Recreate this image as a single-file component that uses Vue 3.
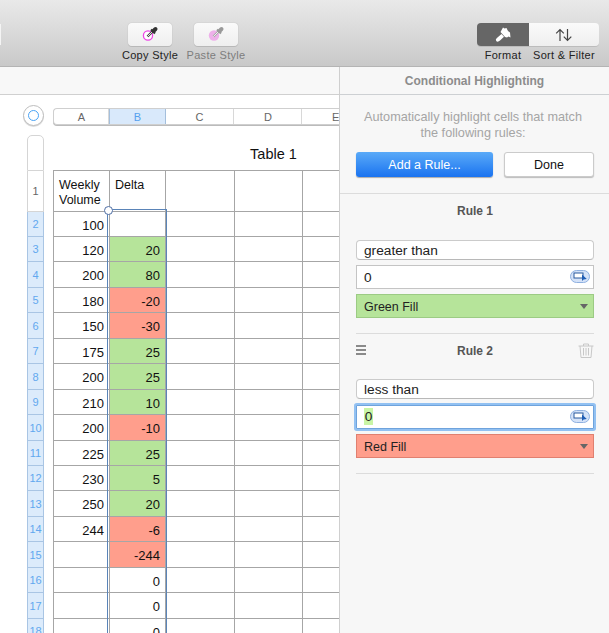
<script setup>
const cols = ['A', 'B', 'C', 'D', 'E']
const rows = [
  { n: 1, h: 41, a: 'Weekly\nVolume', b: 'Delta', head: true },
  { n: 2, h: 25, a: '100', b: '' },
  { n: 3, h: 25, a: '120', b: '20', f: 'g' },
  { n: 4, h: 26, a: '200', b: '80', f: 'g' },
  { n: 5, h: 25, a: '180', b: '-20', f: 'r' },
  { n: 6, h: 26, a: '150', b: '-30', f: 'r' },
  { n: 7, h: 25, a: '175', b: '25', f: 'g' },
  { n: 8, h: 26, a: '200', b: '25', f: 'g' },
  { n: 9, h: 25, a: '210', b: '10', f: 'g' },
  { n: 10, h: 26, a: '200', b: '-10', f: 'r' },
  { n: 11, h: 25, a: '225', b: '25', f: 'g' },
  { n: 12, h: 25, a: '230', b: '5', f: 'g' },
  { n: 13, h: 26, a: '250', b: '20', f: 'g' },
  { n: 14, h: 25, a: '244', b: '-6', f: 'r' },
  { n: 15, h: 26, a: '', b: '-244', f: 'r' },
  { n: 16, h: 25, a: '', b: '0' },
  { n: 17, h: 26, a: '', b: '0' },
  { n: 18, h: 25, a: '', b: '0' },
]
</script>

<template>
  <div class="app">
    <header class="toolbar">
      <div class="cut"></div>
      <div class="tool">
        <div class="tbtn">
          <svg width="20" height="18" viewBox="0 0 20 18" fill="none">
            <circle cx="8" cy="9.5" r="4.6" fill="#fff" stroke="#ee44e6" stroke-width="1.3"/>
            <path d="M7.5 10.5 L12.5 5.5" stroke="#444" stroke-width="2.4"/>
            <path d="M7.5 10.5 L12.5 5.5" stroke="#ddd" stroke-width="1"/>
            <path d="M11 3.5 L15 7.5" stroke="#333" stroke-width="2.2"/>
            <path d="M13.5 5 L15.5 3" stroke="#333" stroke-width="4" stroke-linecap="round"/>
          </svg>
        </div>
        <span class="tl">Copy Style</span>
      </div>
      <div class="tool dim">
        <div class="tbtn">
          <svg width="20" height="18" viewBox="0 0 20 18" fill="none">
            <circle cx="8" cy="9.5" r="5.2" fill="#eeb0ea"/>
            <path d="M7.5 10.5 L12.5 5.5" stroke="#aaa" stroke-width="2.4"/>
            <path d="M7.5 10.5 L12.5 5.5" stroke="#eee" stroke-width="1"/>
            <path d="M11 3.5 L15 7.5" stroke="#999" stroke-width="2.2"/>
            <path d="M13.5 5 L15.5 3" stroke="#999" stroke-width="4" stroke-linecap="round"/>
          </svg>
        </div>
        <span class="tl">Paste Style</span>
      </div>
      <div class="seg-wrap">
        <div class="seg-col">
          <div class="seg dark">
            <svg width="18" height="18" viewBox="0 0 18 18">
              <path d="M6.5 6 L9 1.5 L10.5 2.5 L12.5 2 L14 5 L16 6.5 L16.5 11.5 L14.5 10.5 L13 11.5 L11 11 Z" fill="#fff"/>
              <path d="M7.5 8 L10 10.8 L6 14.5 Q3.8 16.5 2.2 15 Q1 13.3 3.2 11.8 Z" fill="#fff"/>
            </svg>
          </div>
          <span class="tl">Format</span>
        </div>
        <div class="seg-col">
          <div class="seg light">
            <svg width="18" height="14" viewBox="0 0 18 14" fill="none" stroke="#444" stroke-width="1.2">
              <path d="M5 13 V1.5 M1.2 5.3 L5 1.5 L8.8 5.3"/>
              <path d="M12.5 1 V12.5 M8.8 8.7 L12.5 12.5 L16.3 8.7"/>
            </svg>
          </div>
          <span class="tl">Sort &amp; Filter</span>
        </div>
      </div>
    </header>

    <div class="main">
      <section class="sheet">
        <div class="formula"></div>
        <div class="canvas">
          <div class="corner-row">
            <div class="corner"><i></i></div>
            <div class="col-head">
              <span v-for="c in cols" :key="c" :class="['ch', 'ch' + c]">{{ c }}</span>
            </div>
          </div>
          <div class="body">
            <div class="gutter">
              <div class="g-top"></div>
              <div
                v-for="r in rows"
                :key="r.n"
                :class="['g-cell', { sel: r.n > 1 }]"
                :style="{ height: r.h + 'px' }"
              >{{ r.n }}</div>
            </div>
            <div class="table-area">
              <div class="table-title">Table 1</div>
              <div class="grid">
                <div v-for="r in rows" :key="r.n" class="row" :style="{ height: r.h + 'px' }">
                  <div :class="['cell', 'w-a', { head: r.head }]">{{ r.a }}</div>
                  <div :class="['cell', 'w-b', r.f, { head: r.head }]">{{ r.b }}</div>
                  <div class="cell w-c"></div>
                  <div class="cell w-d"></div>
                  <div class="cell w-e"></div>
                </div>
              </div>
              <div class="selection"><b></b></div>
            </div>
          </div>
        </div>
      </section>

      <aside class="panel">
        <div class="p-title">Conditional Highlighting</div>
        <div class="intro">
          <p>Automatically highlight cells that match<br />the following rules:</p>
          <div class="btns">
            <button class="add">Add a Rule...</button>
            <button class="done">Done</button>
          </div>
        </div>

        <div class="rule first">
          <div class="rule-head"><span>Rule 1</span></div>
          <div class="pill">greater than</div>
          <div class="field">
            <span>0</span>
            <svg class="ref" width="20" height="13" viewBox="0 0 20 13">
              <rect x=".5" y=".5" width="19" height="12" rx="6" fill="#d4e2f8" stroke="#8fb0e0"/>
              <rect x="4" y="3" width="9" height="5" fill="#fff" stroke="#2a5a9e"/>
              <path d="M12 4.5 L12 11 L13.6 9.4 L16.8 9 Z" fill="#1f5db5"/>
            </svg>
          </div>
          <div class="fill green">Green Fill<i></i></div>
        </div>

        <div class="rule">
          <div class="rule-head">
            <em class="burger"></em>
            <span>Rule 2</span>
            <svg class="trash" width="16" height="15" viewBox="0 0 16 15" fill="none" stroke="#c8c8c8" stroke-width="1">
              <path d="M.5 3 H15.5 M5.5 3 V1 H10.5 V3"/>
              <path d="M2 3 L3 14.5 H13 L14 3"/>
              <path d="M5.5 5 V12.5 M8 5 V12.5 M10.5 5 V12.5"/>
            </svg>
          </div>
          <div class="pill">less than</div>
          <div class="field focus">
            <span class="hl">0</span>
            <svg class="ref" width="20" height="13" viewBox="0 0 20 13">
              <rect x=".5" y=".5" width="19" height="12" rx="6" fill="#d4e2f8" stroke="#8fb0e0"/>
              <rect x="4" y="3" width="9" height="5" fill="#fff" stroke="#2a5a9e"/>
              <path d="M12 4.5 L12 11 L13.6 9.4 L16.8 9 Z" fill="#1f5db5"/>
            </svg>
          </div>
          <div class="fill red">Red Fill<i></i></div>
        </div>
      </aside>
    </div>
  </div>
</template>

<style>
html, body { margin: 0; height: 100%; overflow: hidden; background: #fff; }
</style>

<style scoped>
.app {
  width: 609px;
  height: 633px;
  overflow: hidden;
  font-family: "Liberation Sans", Arial, sans-serif;
  color: #111;
  display: flex;
  flex-direction: column;
}
.toolbar {
  position: relative;
  flex: none;
  border-bottom: 1px solid #b4b4b4;
  background: linear-gradient(#e9e9e9, #c9c9c9);
  display: flex;
  padding: 23px 10px 0 128px;
  box-sizing: border-box;
  height: 67px;
}
.cut { position: absolute; left: 0; top: 24px; width: 1px; height: 21px; background: #f4f4f4; }
.tool { width: 44px; margin-right: 22px; display: flex; flex-direction: column; align-items: center; }
.tbtn {
  width: 44px;
  height: 23px;
  box-sizing: border-box;
  border-radius: 4px;
  background: linear-gradient(#fafafa, #efefef);
  box-shadow: 0 0 1px #999, 0 1px 0 #bcbcbc;
  display: flex;
  align-items: center;
  justify-content: center;
}
.tl { font-size: 11px; line-height: 13px; margin-top: 3px; white-space: nowrap; color: #222; letter-spacing: .3px; }
.dim .tl { color: #7d7d7d; }
.seg-wrap { margin-left: auto; display: flex; }
.seg-col { display: flex; flex-direction: column; align-items: center; }
.seg { height: 23px; display: flex; align-items: center; justify-content: center; box-shadow: 0 1px 0 #bcbcbc; }
.dark { width: 52px; background: #666; border-radius: 4px 0 0 4px; }
.light { width: 70px; background: linear-gradient(#fafafa, #efefef); border-radius: 0 4px 4px 0; }

.main { flex: 1; min-height: 0; display: flex; }
.sheet { flex: 1; min-width: 0; overflow: hidden; }
.formula { height: 27px; background: #f8f8f8; border-bottom: 1px solid #d0d0d0; }
.canvas { padding: 10px 0 0 23px; }
.corner-row { display: flex; align-items: flex-start; height: 21px; }
.corner {
  flex: none;
  box-sizing: border-box;
  width: 21px;
  height: 21px;
  border: 1px solid #bdbdbd;
  border-radius: 50%;
  background: #fff;
  display: flex;
  align-items: center;
  justify-content: center;
  box-shadow: 0 1px 0 #ddd;
}
.corner i { box-sizing: border-box; width: 11px; height: 11px; border: 1.5px solid #4aa3f5; border-radius: 50%; display: block; }
.col-head {
  margin-left: 9px;
  margin-top: 3px;
  height: 17px;
  box-sizing: border-box;
  flex: none;
  display: flex;
  border: 1px solid #cfcfcf;
  border-right: 0;
  border-radius: 4px 0 0 4px;
  box-shadow: 0 1px 0 #bbb;
  font-size: 11px;
  color: #666;
  background: #fff;
}
.ch { flex: none; display: flex; align-items: center; justify-content: center; border-right: 1px solid #d8d8d8; box-sizing: border-box; }
.chA { width: 55px; padding-left: 1px; }
.chB { width: 57px; background: #d9e9fb; color: #55a0ee; border-left: 1px solid #a4bfdc; border-right: 1px solid #a4bfdc; }
.chC { width: 68px; }
.chD { width: 68px; padding-left: 1px; }
.chE { width: 40px; border: 0; justify-content: flex-start; padding-left: 30px; }

.body { display: flex; margin-top: 9px; }
.gutter { width: 17px; margin-left: 4px; flex: none; font-size: 11px; color: #666; }
.g-top { height: 36px; border: 1px solid #d5d5d5; border-radius: 5px 5px 0 0; box-sizing: border-box; }
.g-cell {
  box-sizing: border-box;
  border: 1px solid #d5d5d5;
  border-top: 0;
  display: flex;
  align-items: center;
  justify-content: center;
  background: #fff;
}
.g-cell.sel { background: #dcebfb; color: #62a8ef; border-color: #a9c5e4; }

.table-area { position: relative; margin-left: 9px; flex: none; width: 300px; }
.table-title { height: 35px; padding: 10px 0 0 141px; box-sizing: border-box; text-align: center; font-size: 14.5px; line-height: 18px; width: 300px; }
.grid { border-top: 1px solid #a6a6a6; border-left: 1px solid #a6a6a6; width: 299px; }
.row { display: flex; box-sizing: border-box; border-bottom: 1px solid #a6a6a6; }
.cell {
  box-sizing: border-box;
  border-right: 1px solid #a6a6a6;
  font-size: 13px;
  padding: 6px 5px 0;
  text-align: right;
  line-height: 15px;
  white-space: pre-line;
  flex: none;
}
.cell.head { text-align: left; font-size: 12.5px; padding-top: 7px; }
.w-a { width: 56px; }
.w-b { width: 56px; }
.w-c { width: 69px; }
.w-d { width: 68px; }
.w-e { width: 60px; }
.g { background: #b6e49a; }
.r { background: #ff9e8c; }
.selection {
  position: absolute;
  left: 54px;
  top: 74px;
  width: 60px;
  height: 500px;
  box-sizing: border-box;
  border: 1px solid #5a84b8;
  pointer-events: none;
}
.selection b {
  position: absolute;
  left: -4px;
  top: -4px;
  width: 7px;
  height: 7px;
  border-radius: 50%;
  background: #fff;
  border: 1px solid #4e6ea5;
}

.panel {
  width: 270px;
  flex: none;
  box-sizing: border-box;
  background: #f7f7f7;
  border-left: 1px solid #cfcfcf;
}
.p-title {
  height: 28px;
  box-sizing: border-box;
  border-bottom: 1px solid #cdd0d3;
  text-align: center;
  font-size: 12px;
  font-weight: bold;
  line-height: 28px;
  color: #8c8c8c;
}
.intro { padding: 0 15px 0 16px; height: 99px; border-bottom: 1px solid #dcdcdc; box-sizing: border-box; }
.intro p { margin: 0; padding: 14px 4px 0 0; text-align: center; font-size: 12.7px; line-height: 16px; color: #a5a5a5; }
.btns { display: flex; justify-content: space-between; margin-top: 11px; }
.btns button { font-family: inherit; font-size: 12.5px; height: 25px; border-radius: 3px; padding: 0; }
.add {
  width: 137px;
  border: 0;
  color: #fff;
  background: linear-gradient(#5aaaf8, #1a73f0);
  box-shadow: 0 1px 1px #aaa;
}
.done {
  width: 90px;
  background: #fff;
  color: #111;
  border: 1px solid #cbcbcb;
  box-shadow: 0 1px 1px #bbb;
}
.rule { margin: 0 15px 0 16px; border-bottom: 1px solid #dcdcdc; padding-bottom: 15px; }
.rule-head {
  position: relative;
  height: 45px;
  display: flex;
  align-items: center;
  justify-content: center;
  font-size: 12px;
  font-weight: bold;
  color: #555;
  padding-bottom: 12px;
  box-sizing: border-box;
}
.rule.first .rule-head { height: 46px; padding-bottom: 13px; }
.burger {
  position: absolute;
  left: 0;
  top: 11px;
  width: 10px;
  height: 2px;
  background: #8a8a8a;
  box-shadow: 0 4px 0 #8a8a8a, 0 8px 0 #8a8a8a;
}
.trash { position: absolute; right: 0; top: 9px; }
.pill {
  height: 20px;
  box-sizing: border-box;
  border: 1px solid #cbcbcb;
  border-bottom-color: #b8b8b8;
  border-radius: 4px;
  background: #fff;
  font-size: 13.7px;
  line-height: 20px;
  padding-left: 7px;
  color: #222;
}
.field {
  position: relative;
  margin-top: 5px;
  height: 24px;
  box-sizing: border-box;
  border: 1px solid #c4c4c4;
  background: #fff;
  font-size: 13.7px;
  line-height: 24px;
  padding-left: 7px;
  color: #222;
}
.focus { margin-top: 6px; border: 1px solid #6fa3dc; box-shadow: 0 0 0 2px #92c1f2; border-radius: 1px; }
.hl { background: #c9f5a6; display: inline-block; vertical-align: top; width: 9px; height: 17px; line-height: 17px; margin-top: 2px; text-align: center; }
.ref { position: absolute; right: 3px; top: 4px; }
.fill {
  position: relative;
  margin-top: 5px;
  height: 24px;
  box-sizing: border-box;
  font-size: 12.5px;
  line-height: 24px;
  padding-left: 7px;
  color: #222;
}
.green { background: #b6e49a; border: 1px solid #9ccb84; }
.red { background: #ff9e8c; border: 1px solid #e08070; }
.fill i {
  position: absolute;
  right: 5px;
  top: 9px;
  width: 0;
  height: 0;
  border: 4px solid transparent;
  border-top: 5px solid #666;
  border-bottom: 0;
}
</style>
